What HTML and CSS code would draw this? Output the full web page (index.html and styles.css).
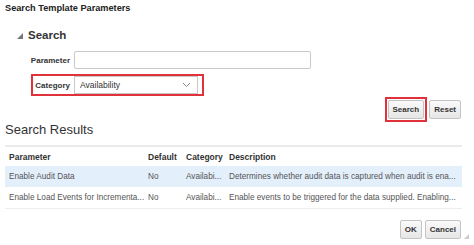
FILE: index.html
```html
<!DOCTYPE html>
<html lang="en">
<head>
  <meta charset="UTF-8" />
  <title>Search Template Parameters</title>
  <link rel="stylesheet" href="styles.css">
</head>
<body>

  <div class="dialogo">
    <h1 class="titulo">Search Template Parameters</h1>

    <div class="busca-topo">
      <span class="triangulo"></span>
      <h2>Search</h2>
    </div>

    <div class="form-linha">
      <label for="parametro">Parameter</label>
      <input id="parametro" type="text" />
    </div>

    <div class="form-linha destaque">
      <label for="categoria">Category</label>
      <div class="select">
        <span>Availability</span>
        <svg width="9" height="6" viewBox="0 0 9 6"><path d="M1 1 L4.5 4.5 L8 1" fill="none" stroke="#888" stroke-width="1"/></svg>
      </div>
    </div>

    <div class="botoes">
      <span class="marcado"><button class="botao">Search</button></span>
      <button class="botao">Reset</button>
    </div>

    <h3 class="resultados">Search Results</h3>

    <table class="tabela">
      <thead>
        <tr>
          <th class="c-param">Parameter</th>
          <th class="c-def">Default</th>
          <th class="c-cat">Category</th>
          <th>Description</th>
        </tr>
      </thead>
      <tbody>
        <tr class="ativo">
          <td>Enable Audit Data</td>
          <td>No</td>
          <td>Availabi...</td>
          <td>Determines whether audit data is captured when audit is ena...</td>
        </tr>
        <tr>
          <td>Enable Load Events for Incrementa...</td>
          <td>No</td>
          <td>Availabi...</td>
          <td>Enable events to be triggered for the data supplied. Enabling...</td>
        </tr>
      </tbody>
    </table>

    <div class="rodape">
      <button class="botao">OK</button>
      <button class="botao">Cancel</button>
      <span class="grip"></span>
    </div>
  </div>

</body>
</html>
```

FILE: styles.css
```css
body {
  margin: 0;
  font-family: "Liberation Sans", Arial, sans-serif;
  background-color: #fff;
  color: #333;
}

.dialogo {
  width: 474px;
  height: 245px;
  position: relative;
}

.titulo {
  margin: 0;
  padding: 2px 5px 0;
  font-size: 9.2px;
  line-height: 12px;
  font-weight: bold;
  color: #222;
}

.busca-topo {
  display: flex;
  align-items: center;
  margin-top: 13px;
  padding-left: 17px;
  height: 16px;
}

.triangulo {
  width: 0;
  height: 0;
  border-left: 6px solid transparent;
  border-bottom: 6px solid #777;
  margin-right: 5px;
  margin-top: 2px;
}

.busca-topo h2 {
  margin: 0;
  font-size: 11.5px;
  font-weight: bold;
  color: #333;
}

.form-linha {
  display: flex;
  align-items: center;
  margin-top: 8px;
  height: 18px;
}

.form-linha label {
  width: 74px;
  text-align: right;
  padding-right: 4px;
  box-sizing: border-box;
  font-size: 8px;
  font-weight: bold;
  color: #333;
}

.form-linha input {
  width: 237px;
  height: 18px;
  box-sizing: border-box;
  border: 1px solid #c8c8c8;
  border-radius: 2px;
  margin: 0;
}

.destaque {
  margin-top: 5px;
  margin-left: 31px;
  width: 173px;
  height: 22px;
  box-sizing: border-box;
  border: 2px solid #e0323a;
}

.destaque label {
  width: 41px;
}

.select {
  width: 124px;
  height: 18px;
  box-sizing: border-box;
  border: 1px solid #c8c8c8;
  display: flex;
  align-items: center;
  justify-content: space-between;
  padding: 0 6px 0 5px;
  font-size: 8.5px;
  color: #333;
}

.botoes {
  display: flex;
  justify-content: flex-end;
  align-items: center;
  padding-right: 13px;
  margin-top: 1px;
  height: 25px;
}

.marcado {
  border: 2px solid #e0323a;
  padding: 1px;
  margin-right: 2px;
  display: flex;
}

.botao {
  font-family: "Liberation Sans", Arial, sans-serif;
  font-size: 8px;
  font-weight: bold;
  color: #333;
  background: linear-gradient(#fafafa, #e6e6e6);
  border: 1px solid #c4c4c4;
  border-radius: 2px;
  height: 19px;
  padding: 0 4px;
  margin: 0;
}

.resultados {
  margin: 0;
  padding: 0 5px;
  font-size: 13px;
  line-height: 16px;
  font-weight: normal;
  color: #333;
}

.tabela {
  margin: 7px 0 0 5px;
  width: 457px;
  border-collapse: collapse;
  table-layout: fixed;
  font-size: 8.2px;
  border-top: 2px solid #ebebeb;
}

.tabela th,
.tabela td {
  text-align: left;
  padding: 0 4px;
  height: 21px;
  white-space: nowrap;
  overflow: hidden;
}

.tabela th {
  font-weight: bold;
  font-size: 8.5px;
  color: #333;
  height: 19px;
}

.tabela td {
  color: #555;
}

.tabela tbody tr:last-child td {
  border-bottom: 1px solid #eee;
}

.c-param { width: 131px; }
.c-def { width: 30px; }
.c-cat { width: 35px; }

.tabela tr.ativo td {
  background-color: #e3effb;
}

.rodape {
  display: flex;
  justify-content: flex-end;
  gap: 3px;
  padding-right: 13px;
  margin-top: 11px;
}

.grip {
  position: absolute;
  right: 5px;
  bottom: 6px;
  width: 0;
  height: 0;
  border-left: 5px solid transparent;
  border-bottom: 5px solid #ccc;
}
```
